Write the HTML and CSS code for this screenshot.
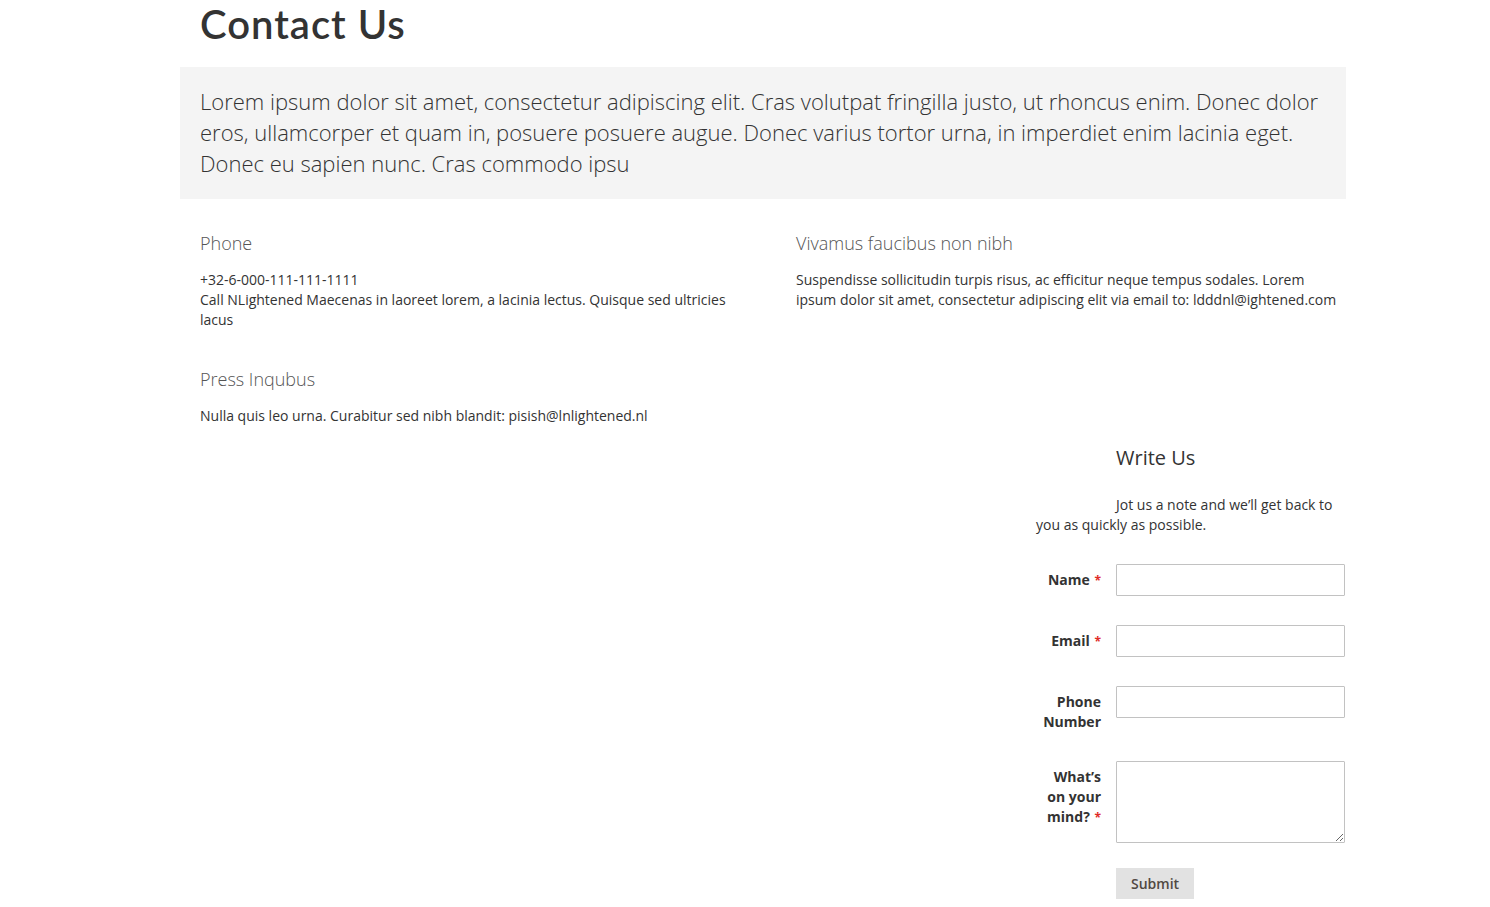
FILE: index.html
```html
<!DOCTYPE html>
<html lang="en">
<head>
<meta charset="utf-8">
<title>Contact Us</title>
<link rel="stylesheet" href="styles.css">
</head>
<body>
<main class="page">
  <h1 class="page-title">Contact Us</h1>
  <div class="intro">
    Lorem ipsum dolor sit amet, consectetur adipiscing elit. Cras volutpat fringilla justo, ut rhoncus enim. Donec dolor eros, ullamcorper et quam in, posuere posuere augue. Donec varius tortor urna, in imperdiet enim lacinia eget. Donec eu sapien nunc. Cras commodo ipsu
  </div>
  <div class="info-grid">
    <section class="info-block">
      <h3 class="info-title">Phone</h3>
      <p class="info-text">+32-6-000-111-111-1111<br>Call NLightened Maecenas in laoreet lorem, a lacinia lectus. Quisque sed ultricies lacus</p>
    </section>
    <section class="info-block">
      <h3 class="info-title">Vivamus faucibus non nibh</h3>
      <p class="info-text">Suspendisse sollicitudin turpis risus, ac efficitur neque tempus sodales. Lorem ipsum dolor sit amet, consectetur adipiscing elit via email to: ldddnl@ightened.com</p>
    </section>
    <section class="info-block">
      <h3 class="info-title">Press Inqubus</h3>
      <p class="info-text">Nulla quis leo urna. Curabitur sed nibh blandit: pisish@lnlightened.nl</p>
    </section>
  </div>
  <form class="contact-form">
    <div class="legend">Write Us</div>
    <p class="note">Jot us a note and we’ll get back to you as quickly as possible.</p>
    <div class="field">
      <label class="label">Name <span class="req">*</span></label>
      <input class="input" type="text">
    </div>
    <div class="field">
      <label class="label">Email <span class="req">*</span></label>
      <input class="input" type="text">
    </div>
    <div class="field">
      <label class="label">Phone Number</label>
      <input class="input" type="text">
    </div>
    <div class="field">
      <label class="label">What’s on your mind? <span class="req">*</span></label>
      <textarea class="textarea"></textarea>
    </div>
    <div class="actions">
      <button class="submit" type="button">Submit</button>
    </div>
  </form>
</main>
</body>
</html>
```
FILE: styles.css
```css
html, body {
  margin: 0;
  padding: 0;
  background: #fff;
}
body {
  font-family: "Open Sans", "Liberation Sans", sans-serif;
  font-size: 14px;
  line-height: 20px;
  color: #333;
}
.page {
  width: 1166px;
  margin-left: 180px;
}
.page-title {
  font-family: "Lato", "Open Sans", sans-serif;
  font-weight: 600;
  font-size: 40px;
  line-height: 48px;
  letter-spacing: 1px;
  margin: 0;
  padding: 0 20px 19px;
  color: #333;
}
.intro {
  background: #f4f4f4;
  padding: 19px 20px 20px;
  font-size: 22px;
  font-weight: 300;
  line-height: 31px;
}
.info-grid {
  display: grid;
  grid-template-columns: 560px 550px;
  column-gap: 36px;
  padding: 32px 20px 0;
  row-gap: 37px;
}
.info-title {
  margin: 0 0 15px;
  font-size: 18px;
  font-weight: 300;
  line-height: 24px;
  color: #555;
}
.info-text {
  margin: 0;
}
.contact-form {
  width: 310px;
  margin: 19px 0 0 auto;
}
.legend {
  padding-left: 80px;
  font-size: 20px;
  line-height: 26px;
  color: #333;
  margin-bottom: 24px;
}
.note {
  margin: 0 0 29px;
  text-indent: 80px;
}
.field {
  display: grid;
  grid-template-columns: 65px 229px;
  column-gap: 15px;
  margin-bottom: 29px;
}
.label {
  padding-top: 6px;
  text-align: right;
  font-weight: 700;
}
.req {
  color: #e02b27;
  font-size: 12px;
  margin-left: 1px;
}
.input, .textarea {
  box-sizing: border-box;
  width: 229px;
  height: 32px;
  border: 1px solid #c2c2c2;
  border-radius: 1px;
  margin: 0;
  padding: 0 9px;
  font-family: inherit;
  font-size: 14px;
  background: #fff;
}
.textarea {
  height: 82px;
  padding: 8px 9px;
  resize: vertical;
}
.actions {
  padding-left: 80px;
  margin-top: -4px;
}
.submit {
  background: #e2e2e2;
  border: 1px solid #e2e2e2;
  color: #514943;
  font-family: inherit;
  font-weight: 600;
  font-size: 14px;
  line-height: 16px;
  padding: 7px 14px;
  border-radius: 0;
  width: 78px;
  height: 31px;
}
```
